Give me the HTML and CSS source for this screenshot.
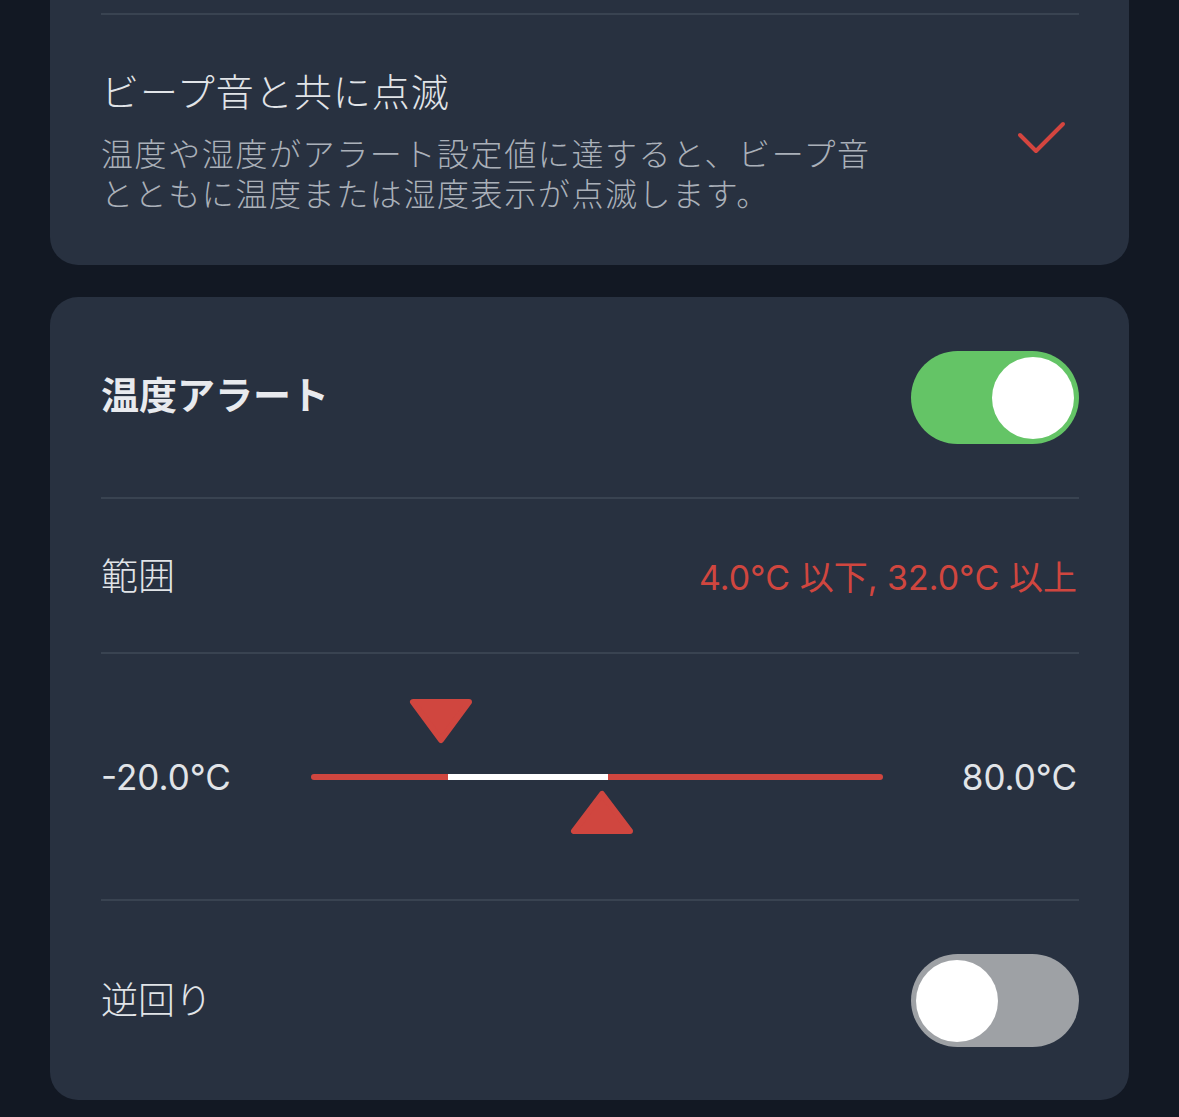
FILE: index.html
```html
<!DOCTYPE html>
<html lang="ja">
<head>
<meta charset="utf-8">
<link rel="stylesheet" href="styles.css">
</head>
<body>
<div class="page">
  <section class="card card-top">
    <div class="sep"></div>
    <div class="row row-option">
      <div class="option-text">
        <div class="option-title">ビープ音と共に点滅</div>
        <div class="option-desc">温度や湿度がアラート設定値に達すると、ビープ音とともに温度または湿度表示が点滅します。</div>
      </div>
      <svg class="check" width="50" height="36" viewBox="0 0 50 36">
        <polyline points="3,14 19,30 46,3" fill="none" stroke="#d4453f" stroke-width="4" stroke-linecap="round" stroke-linejoin="round"/>
      </svg>
    </div>
  </section>

  <section class="card card-alert">
    <div class="row row-head">
      <div class="head-title">温度アラート</div>
      <div class="toggle toggle-on"><div class="knob"></div></div>
    </div>
    <div class="sep"></div>
    <div class="row row-range">
      <div class="label">範囲</div>
      <div class="range-value">4.0°C 以下, 32.0°C 以上</div>
    </div>
    <div class="sep"></div>
    <div class="row row-slider">
      <div class="slider-min">-20.0°C</div>
      <div class="slider">
        <div class="track">
          <div class="seg seg-red" style="width:24%"></div>
          <div class="seg seg-white" style="width:28%"></div>
          <div class="seg seg-red seg-end" style="width:48%"></div>
        </div>
        <svg class="thumb thumb-low" width="64" height="48" viewBox="0 0 64 48">
          <polygon points="4,4 60,4 32,42" fill="#d0463f" stroke="#d0463f" stroke-width="6" stroke-linejoin="round"/>
        </svg>
        <svg class="thumb thumb-high" width="64" height="48" viewBox="0 0 64 48">
          <polygon points="4,42 60,42 32,5" fill="#d0463f" stroke="#d0463f" stroke-width="6" stroke-linejoin="round"/>
        </svg>
      </div>
      <div class="slider-max">80.0°C</div>
    </div>
    <div class="sep"></div>
    <div class="row row-reverse">
      <div class="label label-reverse">逆回り</div>
      <div class="toggle toggle-off"><div class="knob"></div></div>
    </div>
  </section>
</div>
</body>
</html>
```

FILE: styles.css
```css
html, body {
  margin: 0;
  padding: 0;
  background: #121823;
}
body {
  font-family: "Noto Sans CJK JP", "Noto Sans", sans-serif;
  color: #e3e6ea;
  width: 1179px;
  height: 1117px;
  overflow: hidden;
}
.page {
  padding: 0 50px;
  display: flex;
  flex-direction: column;
  gap: 32px;
}
.card {
  background: #283140;
  border-radius: 28px;
  padding: 0 50px 0 51px;
}
.card-top {
  border-radius: 0 0 28px 28px;
  padding-top: 13px;
}
.sep {
  height: 2px;
  background: #394351;
}
.row {
  display: flex;
  align-items: center;
  justify-content: space-between;
}
.row-option {
  height: 250px;
}
.option-text {
  width: 790px;
  padding-bottom: 3px;
}
.option-title {
  font-size: 38px;
  font-weight: 300;
  letter-spacing: 1px;
  line-height: 50px;
  color: #e1e4e8;
}
.option-desc {
  margin-top: 17px;
  font-size: 32px;
  font-weight: 300;
  letter-spacing: 1.6px;
  line-height: 40px;
  color: #aab0b9;
}
.check {
  margin-right: 12px;
  margin-top: -2px;
}
.row-head {
  height: 200px;
}
.head-title {
  font-size: 38px;
  font-weight: 700;
  color: #e8eaee;
  margin-bottom: 10px;
}
.toggle {
  width: 168px;
  height: 93px;
  border-radius: 47px;
  position: relative;
  flex: none;
}
.toggle-on {
  background: #64c466;
}
.toggle-off {
  background: #9ea1a5;
}
.knob {
  position: absolute;
  top: 6px;
  width: 82px;
  height: 82px;
  border-radius: 50%;
  background: #ffffff;
}
.toggle-on .knob {
  right: 5px;
}
.toggle-off .knob {
  left: 5px;
}
.row-range {
  height: 153px;
}
.label {
  font-size: 37px;
  font-weight: 300;
  color: #e1e4e8;
  margin-bottom: 3px;
}
.label-reverse {
  margin-bottom: 6px;
}
.range-value {
  font-family: Inter, "Noto Sans CJK JP", sans-serif;
  font-size: 34px;
  font-weight: 400;
  color: #d0463f;
  margin-right: 2px;
}
.row-slider {
  height: 245px;
}
.slider-min, .slider-max {
  font-family: Inter, "Noto Sans CJK JP", sans-serif;
  font-size: 35px;
  font-weight: 400;
  color: #e1e4e8;
  flex: none;
}
.slider-min {
  width: 210px;
}
.slider-max {
  width: 196px;
  text-align: right;
  padding-right: 2px;
  box-sizing: border-box;
}
.slider {
  flex: 1;
  position: relative;
  height: 6px;
}
.track {
  display: flex;
  height: 6px;
}
.seg {
  height: 6px;
}
.seg-red {
  background: #d0463f;
}
.seg-red:first-child {
  border-radius: 3px 0 0 3px;
}
.seg-end {
  border-radius: 0 3px 3px 0;
}
.seg-white {
  background: #ffffff;
}
.thumb {
  position: absolute;
}
.thumb-low {
  left: 98px;
  top: -76px;
}
.thumb-high {
  left: 259px;
  top: 15px;
}
.row-reverse {
  height: 199px;
}
```
